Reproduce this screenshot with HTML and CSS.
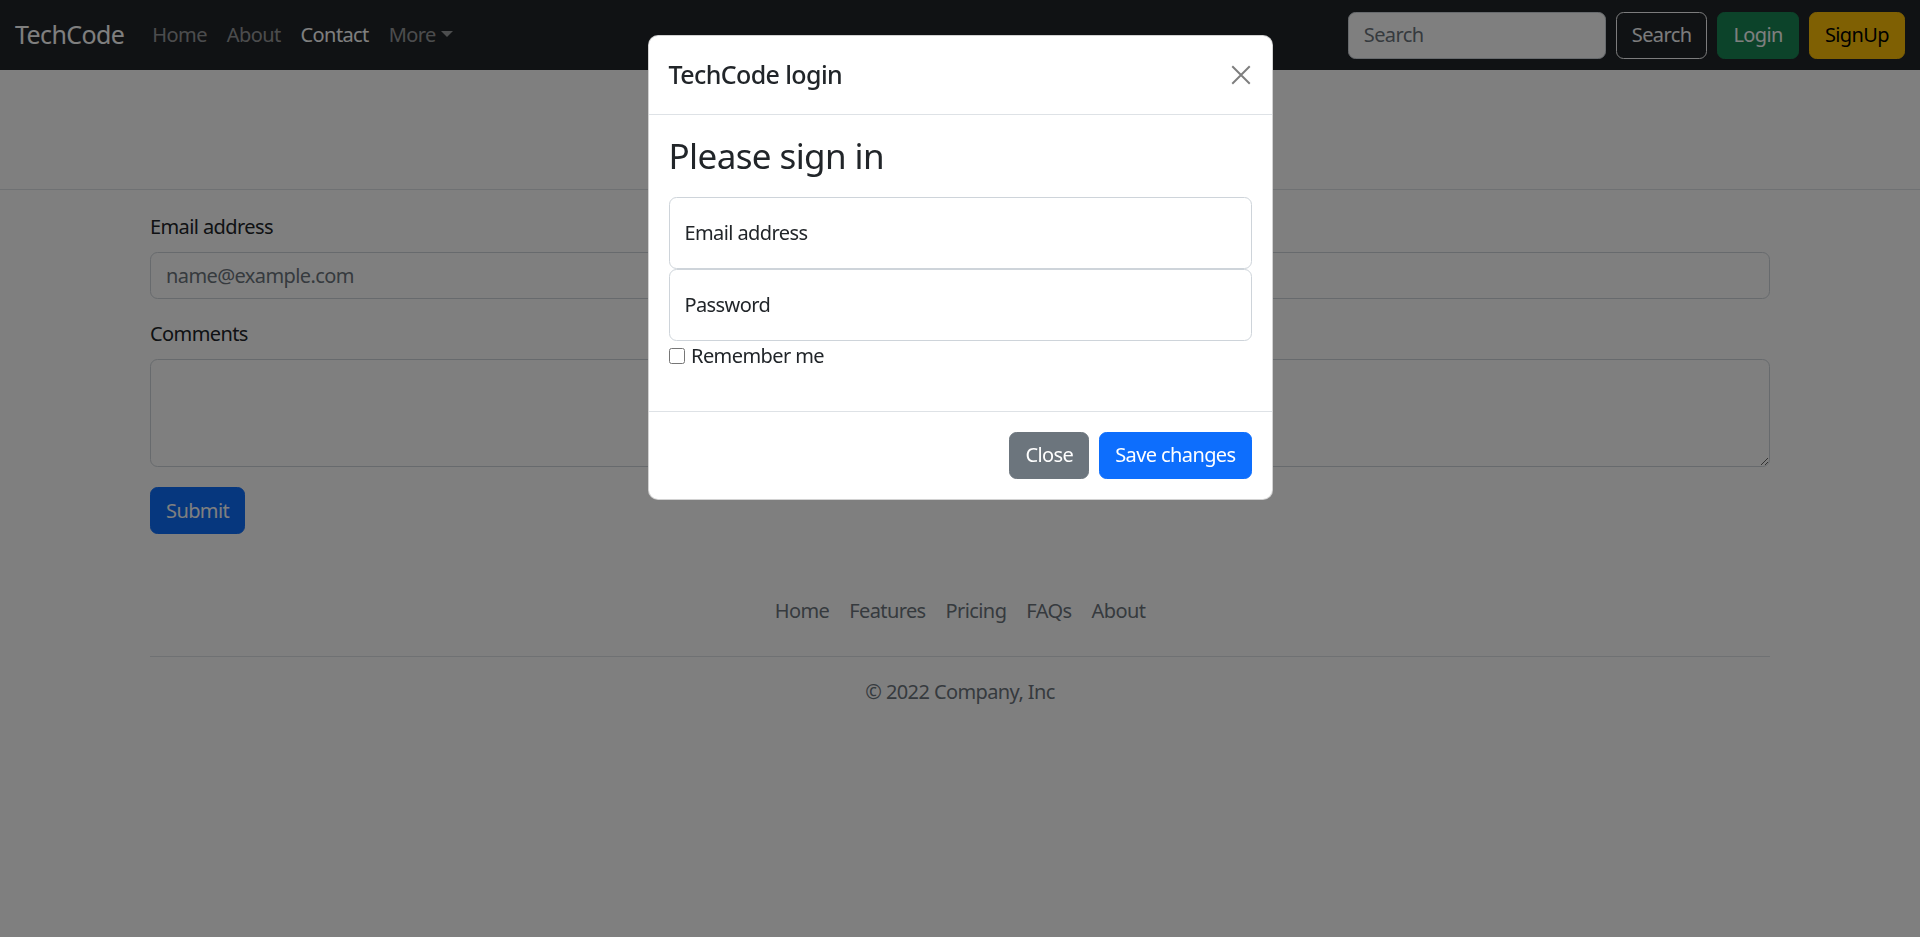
FILE: index.html
```html
<!DOCTYPE html>
<html lang="en">
<head>
  <meta charset="UTF-8" />
  <meta name="viewport" content="width=device-width, initial-scale=1.0" />
  <title>TechCode - Contact</title>
  <link rel="stylesheet" href="styles.css">
</head>
<body>
  <!-- Navbar -->
  <nav class="navbar">
    <a class="brand" href="#">TechCode</a>
    <ul class="nav-links">
      <li><a href="#">Home</a></li>
      <li><a href="#">About</a></li>
      <li><a class="active" href="#">Contact</a></li>
      <li><a class="dropdown-toggle" href="#">More</a></li>
    </ul>
    <form class="nav-search">
      <input type="search" class="form-control search-input" placeholder="Search">
      <button type="button" class="btn btn-outline-light">Search</button>
    </form>
    <button type="button" class="btn btn-success">Login</button>
    <button type="button" class="btn btn-warning">SignUp</button>
  </nav>

  <div class="top-band"></div>

  <!-- Contact form -->
  <main class="container">
    <div class="field">
      <label class="form-label">Email address</label>
      <input type="email" class="form-control" placeholder="name@example.com">
    </div>
    <div class="field">
      <label class="form-label">Comments</label>
      <textarea class="form-control" rows="3"></textarea>
    </div>
    <button type="button" class="btn btn-primary">Submit</button>
  </main>

  <footer class="container footer">
    <ul class="footer-nav">
      <li><a href="#">Home</a></li>
      <li><a href="#">Features</a></li>
      <li><a href="#">Pricing</a></li>
      <li><a href="#">FAQs</a></li>
      <li><a href="#">About</a></li>
    </ul>
    <p class="copyright">&copy; 2022 Company, Inc</p>
  </footer>

  <!-- Login modal -->
  <div class="modal-backdrop"></div>
  <div class="modal">
    <div class="modal-dialog">
      <div class="modal-header">
        <h5 class="modal-title">TechCode login</h5>
        <button type="button" class="btn-close" aria-label="Close">
          <svg viewBox="0 0 16 16"><path d="M1 1L15 15M15 1L1 15"/></svg>
        </button>
      </div>
      <div class="modal-body">
        <h1 class="signin-title">Please sign in</h1>
        <input type="email" class="form-control floating" placeholder="Email address">
        <input type="password" class="form-control floating" placeholder="Password">
        <div class="checkbox">
          <label><input type="checkbox" value="remember-me"> Remember me</label>
        </div>
      </div>
      <div class="modal-footer">
        <button type="button" class="btn btn-secondary">Close</button>
        <button type="button" class="btn btn-primary">Save changes</button>
      </div>
    </div>
  </div>
</body>
</html>
```

FILE: styles.css
```css
html {
  font-size: 20px;
}
body {
  margin: 0;
  font-family: "Noto Sans", "Open Sans", Arial, sans-serif;
  font-size: 1rem;
  line-height: 1.5;
  letter-spacing: -0.03em;
  color: #212529;
  background: #fff;
}
a {
  text-decoration: none;
}
ul {
  list-style: none;
  margin: 0;
  padding: 0;
}

/* buttons */
.btn {
  display: inline-block;
  font-family: inherit;
  font-size: 1rem;
  line-height: 1.5;
  letter-spacing: inherit;
  padding: .375rem .75rem;
  border: 1px solid transparent;
  border-radius: .375rem;
  cursor: pointer;
  color: #fff;
}
.btn-primary {
  background: #0d6efd;
  border-color: #0d6efd;
}
.btn-secondary {
  background: #6c757d;
  border-color: #6c757d;
}
.btn-success {
  background: #198754;
  border-color: #198754;
}
.btn-warning {
  background: #ffc107;
  border-color: #ffc107;
  color: #000;
}
.btn-outline-light {
  background: transparent;
  border-color: #f8f9fa;
  color: #f8f9fa;
}

/* inputs */
.form-control {
  display: block;
  width: 100%;
  box-sizing: border-box;
  font-family: inherit;
  font-size: 1rem;
  line-height: 1.5;
  letter-spacing: inherit;
  padding: .375rem .75rem;
  color: #212529;
  background: #fff;
  border: 1px solid #ced4da;
  border-radius: .375rem;
  margin: 0;
}
.form-control::placeholder {
  color: #6c757d;
}

/* navbar */
.navbar {
  display: flex;
  align-items: center;
  background: #212529;
  padding: .5rem .75rem;
}
.brand {
  color: #fff;
  font-size: 1.25rem;
  padding: .3125rem 0;
  margin-right: .9rem;
}
.nav-links {
  display: flex;
  margin-right: auto;
}
.nav-links a {
  display: block;
  padding: .5rem;
  color: rgba(255, 255, 255, .55);
}
.nav-links a.active {
  color: #fff;
}
.dropdown-toggle::after {
  content: "";
  display: inline-block;
  margin-left: .255em;
  vertical-align: .255em;
  border-top: .3em solid;
  border-right: .3em solid transparent;
  border-left: .3em solid transparent;
}
.nav-search {
  display: flex;
  margin: 0 .5rem 0 0;
}
.search-input {
  width: 12.9rem;
  margin-right: .5rem;
}
.navbar .btn-success {
  margin-right: .5rem;
}

/* page */
.top-band {
  height: 6rem;
  box-sizing: border-box;
  border-bottom: 1px solid #dee2e6;
}
.container {
  max-width: 82.5rem;
  margin: 0 auto;
  padding: 0 .75rem;
  box-sizing: border-box;
}
main.container {
  padding-top: 1.1rem;
}
.field {
  margin-bottom: 1rem;
}
.form-label {
  display: inline-block;
  margin-bottom: .5rem;
}
textarea.form-control {
  resize: vertical;
  height: calc(4.5rem + .8rem + 2px);
}

/* footer */
.footer {
  margin-top: 1.6rem;
  padding-top: 1rem;
  padding-bottom: 1rem;
}
.footer-nav {
  display: flex;
  justify-content: center;
  padding-bottom: 1rem;
  margin-bottom: 1rem;
  border-bottom: 1px solid #dee2e6;
}
.footer-nav a {
  display: block;
  padding: .5rem;
  color: #6c757d;
}
.copyright {
  margin: 0;
  text-align: center;
  color: #6c757d;
}

/* modal */
.modal-backdrop {
  position: fixed;
  inset: 0;
  background: #000;
  opacity: .5;
}
.modal {
  position: fixed;
  inset: 0;
}
.modal-dialog {
  width: 31.25rem;
  margin: 1.75rem auto;
  background: #fff;
  border: 1px solid rgba(0, 0, 0, .175);
  border-radius: .5rem;
  box-sizing: border-box;
}
.modal-header {
  display: flex;
  align-items: center;
  padding: 1rem;
  border-bottom: 1px solid #dee2e6;
}
.modal-title {
  margin: 0;
  font-size: 1.25rem;
  font-weight: 500;
  line-height: 1.5;
}
.btn-close {
  display: flex;
  align-items: center;
  justify-content: center;
  font-size: 1rem;
  width: 1em;
  height: 1em;
  box-sizing: content-box;
  padding: .25em;
  margin: -.5rem -.2rem -.5rem auto;
  border: 0;
  background: transparent;
  opacity: .5;
  cursor: pointer;
}
.btn-close svg {
  width: 1em;
  height: 1em;
  fill: none;
  stroke: #000;
  stroke-width: 1.6;
}
.modal-body {
  padding: 1rem;
}
.signin-title {
  margin: 0 0 1rem;
  font-size: 1.75rem;
  font-weight: 400;
  line-height: 1.2;
}
.floating {
  height: calc(3.5rem + 2px);
  padding: 1rem .75rem;
}
.floating::placeholder {
  color: #212529;
}
.checkbox {
  margin-bottom: 1rem;
}
.checkbox input {
  width: .8rem;
  height: .8rem;
  margin: 0 .1rem 0 0;
  vertical-align: -.05rem;
}
.modal-footer {
  display: flex;
  justify-content: flex-end;
  padding: .75rem;
  border-top: 1px solid #dee2e6;
}
.modal-footer .btn {
  margin: .25rem;
}
```
